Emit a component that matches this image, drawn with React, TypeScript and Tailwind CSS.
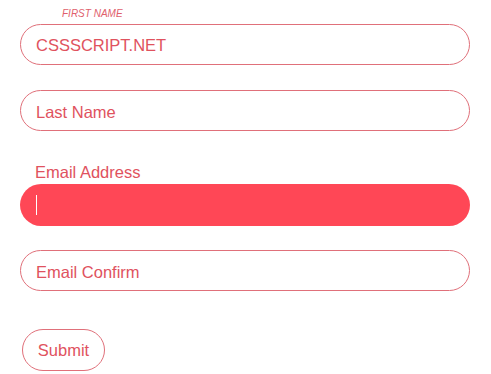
export default function App() {
  const font = { fontFamily: '"Liberation Sans", Arial, sans-serif' };
  return (
    <div className="w-[491px] h-[374px] bg-white overflow-hidden" style={font}>
      <div className="pl-[20px] w-[470px] flex flex-col">
        <div className="mt-[8px] mb-[4px] pl-[42px] text-[10px] leading-[12px] italic text-[#e0606c]">
          FIRST NAME
        </div>
        <div className="h-[41px] rounded-full border border-[#e0707a] flex items-center pl-[15px] pt-[1px] text-[16.5px] text-[#e0525e]">
          CSSSCRIPT.NET
        </div>
        <div className="mt-[25px] h-[41px] rounded-full border border-[#e0707a] flex items-center pl-[15px] pt-[3px] text-[16.5px] text-[#e0525e]">
          Last Name
        </div>
        <div className="mt-[31px] mb-[2px] pl-[15px] text-[16.5px] leading-[20px] text-[#e0525e]">
          Email Address
        </div>
        <div className="h-[42px] rounded-full bg-[#ff4756] flex items-center pl-[16px]">
          <div className="w-[1px] h-[20px] bg-white" />
        </div>
        <div className="mt-[24px] h-[41px] rounded-full border border-[#e0707a] flex items-center pl-[15px] pt-[3px] text-[16.5px] text-[#e0525e]">
          Email Confirm
        </div>
        <div className="mt-[38px] ml-[2px] w-[83px] h-[42px] rounded-full border border-[#e0707a] flex items-center justify-center text-[16.5px] text-[#e0525e]">
          Submit
        </div>
      </div>
    </div>
  );
}
